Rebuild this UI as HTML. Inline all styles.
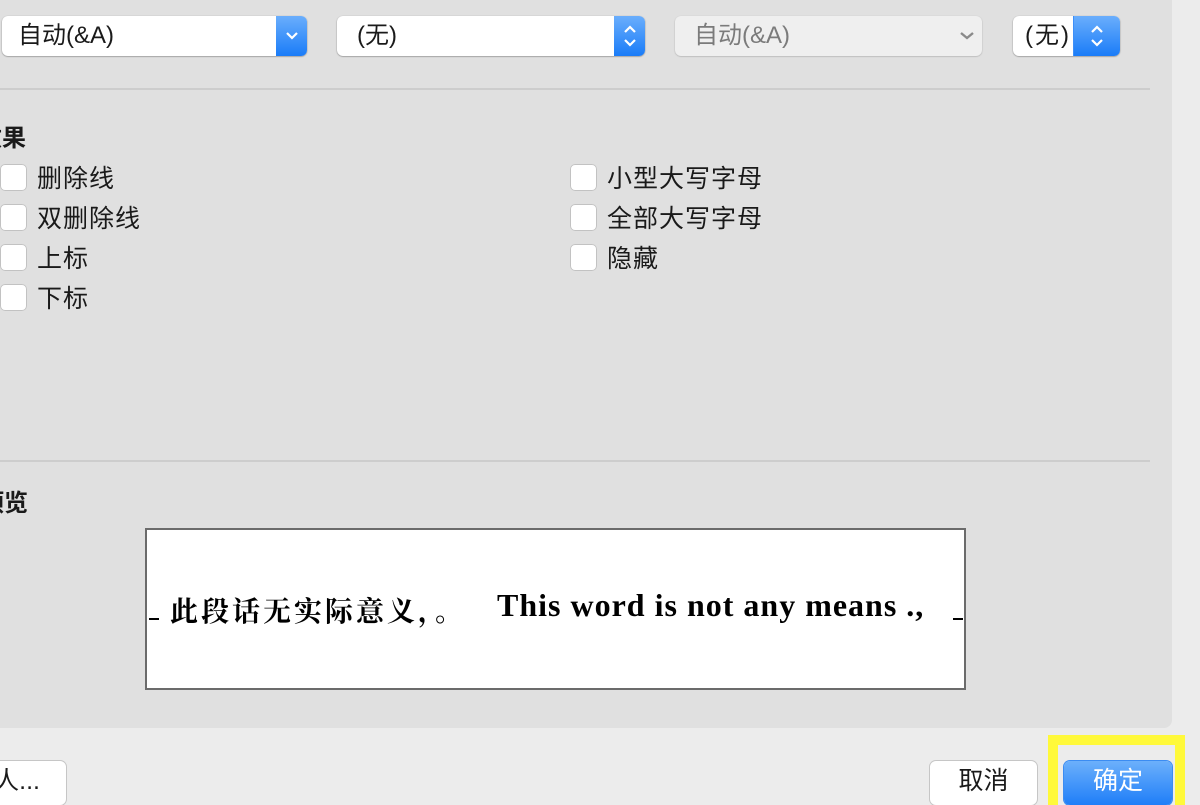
<!DOCTYPE html>
<html><head><meta charset="utf-8"><style>
*{box-sizing:border-box;margin:0;padding:0}
body{width:1200px;height:800px;overflow:hidden;background:#ececec;font-family:"Liberation Sans","Noto Sans CJK SC",sans-serif;color:#1a1a1a;position:relative}
.panel{position:absolute;left:-10px;top:-10px;width:1182px;height:738px;background:#e0e0e0;border-radius:8px}
.sel{position:absolute;top:16px;height:40px;background:#fff;border-radius:6px;box-shadow:0 0.5px 1.5px rgba(0,0,0,.45);font-size:24px;line-height:40px;overflow:hidden}
.sel .b{position:absolute;right:0;top:0;bottom:0;width:31px;background:linear-gradient(#6aaefc,#1a7cf8)}
.sel svg{position:absolute;left:50%;top:50%;transform:translate(-50%,-50%)}
.line{position:absolute;left:0;width:1150px;height:2px;background:#cdcdcd}
.h{position:absolute;left:0;font-size:24px;font-weight:bold}
.cb{position:absolute;width:27px;height:27px;background:#fff;border-radius:5px;box-shadow:0 0 0 1px #c2c2c2 inset}
.lb{position:absolute;font-size:25px;line-height:29px;letter-spacing:1px}
.btn{position:absolute;top:761px;height:44px;background:#fff;border-radius:6px;box-shadow:0 0 0 1px #c6c6c6;font-size:25px;line-height:40px;text-align:center}
</style></head><body>
<div class="panel"></div>
<div class="sel" style="left:2px;width:305px"><span style="margin-left:16px">自动(&amp;A)</span><div class="b"><svg width="14" height="10"><path d="M2 2 L7 7 L12 2" stroke="#fff" stroke-width="2.2" fill="none"/></svg></div></div>
<div class="sel" style="left:337px;width:308px"><span style="margin-left:20px">(无)</span><div class="b"><svg width="14" height="26"><path d="M2 9 L7 4 L12 9 M2 17 L7 22 L12 17" stroke="#fff" stroke-width="2.2" fill="none"/></svg></div></div>
<div class="sel" style="left:675px;width:307px;background:#efefef;color:#7b7b7b;box-shadow:0 0.5px 1.5px rgba(0,0,0,.25)"><span style="margin-left:19px">自动(&amp;A)</span><svg style="left:auto;right:2px;transform:translateY(-50%)" width="22" height="10"><path d="M3 2 L9 7 L15 2" stroke="#8a8a8a" stroke-width="2.4" fill="none"/></svg></div>
<div class="sel" style="left:1013px;width:107px"><span style="margin-left:12px;letter-spacing:2px">(无)</span><div class="b" style="width:47px;border-left:1px solid #3d8ff9"><svg width="14" height="26"><path d="M2 9 L7 4 L12 9 M2 17 L7 22 L12 17" stroke="#fff" stroke-width="2.2" fill="none"/></svg></div></div>
<div class="line" style="top:88px"></div>
<div class="h" style="top:118px;left:-22px">效果</div>
<div class="cb" style="left:0;top:164px"></div><div class="lb" style="left:37px;top:165px">删除线</div>
<div class="cb" style="left:0;top:204px"></div><div class="lb" style="left:37px;top:205px">双删除线</div>
<div class="cb" style="left:0;top:244px"></div><div class="lb" style="left:37px;top:245px">上标</div>
<div class="cb" style="left:0;top:284px"></div><div class="lb" style="left:37px;top:285px">下标</div>
<div class="cb" style="left:570px;top:164px"></div><div class="lb" style="left:607px;top:165px">小型大写字母</div>
<div class="cb" style="left:570px;top:204px"></div><div class="lb" style="left:607px;top:205px">全部大写字母</div>
<div class="cb" style="left:570px;top:244px"></div><div class="lb" style="left:607px;top:245px">隐藏</div>
<div class="line" style="top:460px"></div>
<div class="h" style="top:483px;left:-20px">预览</div>
<div style="position:absolute;left:145px;top:528px;width:821px;height:162px;background:#fff;border:2px solid #6b6b6b"></div>
<div style="position:absolute;left:149px;top:618px;width:10px;height:2px;background:#000"></div>
<div style="position:absolute;left:953px;top:618px;width:10px;height:2px;background:#000"></div>
<div style="position:absolute;left:170px;top:590px;font-size:28px;font-weight:bold;font-family:'Liberation Serif','Noto Serif CJK SC',serif;white-space:nowrap;color:#000;letter-spacing:3px">此段话无实际意义，。</div>
<div style="position:absolute;left:497px;top:587px;font-size:32px;font-weight:bold;font-family:'Liberation Serif',serif;white-space:nowrap;color:#000;letter-spacing:1px">This word is not any means .,</div>
<div class="btn" style="left:-20px;width:86px;text-align:right;padding-right:26px">人...</div>
<div class="btn" style="left:930px;width:107px">取消</div>
<div class="btn" style="left:1064px;width:108px;background:linear-gradient(#6cb0fb,#1f7ef8);color:#fff;box-shadow:0 0 0 1px #3b8cf2">确定</div>
<div style="position:absolute;left:1048px;top:735px;width:137px;height:70px;border:10px solid #fff93a;border-bottom:none"></div>
</body></html>
